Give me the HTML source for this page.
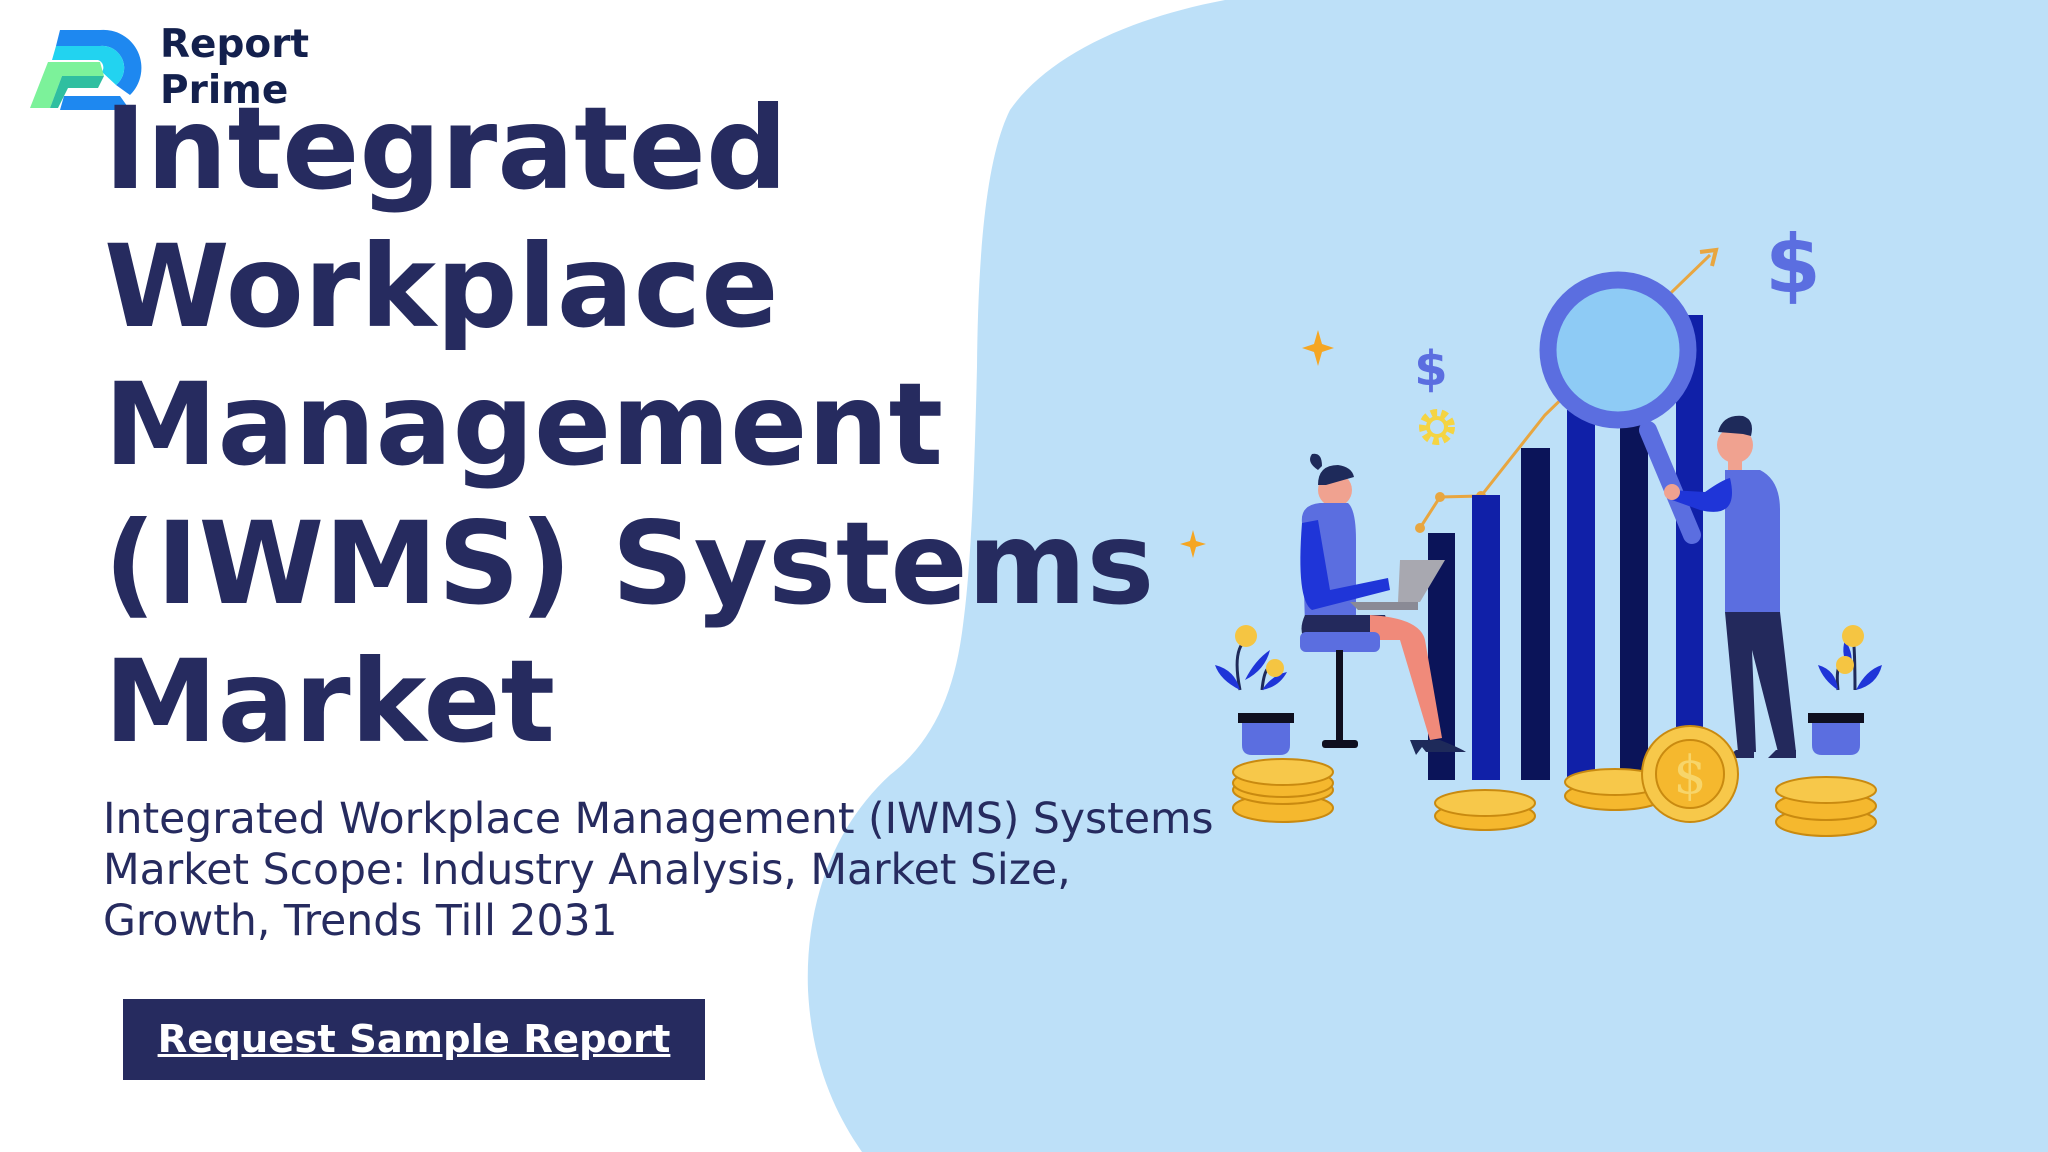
<!DOCTYPE html>
<html><head><meta charset="utf-8"><style>
html,body{margin:0;padding:0}
body{width:2048px;height:1152px;position:relative;overflow:hidden;background:#fff;font-family:"DejaVu Sans","Liberation Sans",sans-serif}
svg.bg{position:absolute;left:0;top:0}
.title{position:absolute;left:104px;top:0;margin:0;font-weight:bold;font-size:114px;color:#262b5f;line-height:138px}
.title div{position:absolute;left:0;white-space:nowrap}
.sub{position:absolute;left:103px;top:794px;font-size:42.5px;line-height:51px;color:#262b5f;white-space:nowrap}
.btn{position:absolute;left:123px;top:999px;width:582px;height:81px;background:#262b5f;color:#fff;font-weight:bold;font-size:38.5px;text-align:center;line-height:81px;text-decoration:underline}
.logo{position:absolute;left:160px;top:22px;font-weight:bold;font-size:39px;line-height:46px;color:#13204d}
</style></head><body>
<svg class="bg" width="2048" height="1152" viewBox="0 0 2048 1152">
<path d="M1225 0 C1120 20 1045 60 1010 110 C985 160 978 260 977 367 C975 450 972 560 963 625 C955 690 935 740 890 775 C830 830 805 910 808 990 C812 1070 840 1120 862 1152 L2048 1152 L2048 0 Z" fill="#bde0f8"/>
<!-- logo icon -->
<path d="M60 30 H100 A38 38 0 0 1 130 95 L116 85 A22 22 0 0 0 100 46 H56 Z" fill="#1e88f0"/>
<path d="M56 46 H100 A22 22 0 0 1 116 85 L102 72 A8 8 0 0 0 98 60 H52 Z" fill="#22d3f0"/>
<path d="M48 62 H100 L104 76 H62 L50 108 H30 Z" fill="#7cf29a"/>
<path d="M62 76 H104 L98 88 H68 L58 108 H50 Z" fill="#2fbfa0"/>
<path d="M64 96 H120 L130 110 H60 Z" fill="#1e88f0"/>
<!-- sparkles -->
<g fill="#f5a623">
<path d="M1318 330 l4 14 l12 4 l-12 4 l-4 14 l-4 -14 l-12 -4 l12 -4z"/>
<path d="M1193 530 l3 11 l10 3 l-10 3 l-3 11 l-3 -11 l-10 -3 l10 -3z"/>
</g>
<polyline points="1420,528 1440,497 1481,496 1545,415 1710,255" fill="none" stroke="#e8a640" stroke-width="3"/>
<circle cx="1420" cy="528" r="5" fill="#e8a640"/><circle cx="1440" cy="497" r="5" fill="#e8a640"/><circle cx="1481" cy="496" r="5" fill="#e8a640"/>
<path d="M1700 252 L1716 250 L1712 266" fill="none" stroke="#e8a640" stroke-width="4"/>
<circle cx="1437" cy="427" r="14" fill="none" stroke="#f5d442" stroke-width="8" stroke-dasharray="6 4"/>
<circle cx="1437" cy="427" r="9" fill="none" stroke="#f5d442" stroke-width="4"/>
<text x="1431" y="385" font-size="48" font-weight="bold" fill="#5b6ee0" text-anchor="middle">$</text>
<text x="1793" y="292" font-size="80" font-weight="bold" fill="#5b6ee0" text-anchor="middle">$</text>
<!-- bars -->
<rect x="1428" y="533" width="27" height="247" fill="#0b1459"/>
<rect x="1472" y="495" width="28" height="285" fill="#1020a8"/>
<rect x="1521" y="448" width="29" height="332" fill="#0b1459"/>
<rect x="1567" y="410" width="28" height="370" fill="#1020a8"/>
<rect x="1620" y="420" width="28" height="360" fill="#0b1459"/>
<rect x="1676" y="315" width="27" height="465" fill="#1020a8"/>
<!-- magnifier -->
<line x1="1648" y1="430" x2="1692" y2="535" stroke="#5b6ee0" stroke-width="18" stroke-linecap="round"/>
<circle cx="1618" cy="350" r="70" fill="#8ecbf5" stroke="#5b6ee0" stroke-width="17"/>
<!-- man -->
<circle cx="1735" cy="445" r="18" fill="#f0a290"/>
<path d="M1718 432 q5 -18 25 -16 q12 4 8 20 l-8 -2 z" fill="#1e2a5a"/>
<rect x="1728" y="458" width="14" height="14" fill="#f0a290"/>
<path d="M1725 470 H1760 Q1780 480 1780 510 V612 H1725 Z" fill="#5b6ee0"/>
<path d="M1730 478 Q1740 520 1700 510 L1672 500 L1670 490 L1705 492 Q1722 480 1730 478 Z" fill="#1f35d8"/>
<circle cx="1672" cy="492" r="8" fill="#f0a290"/>
<path d="M1725 612 H1780 L1796 752 H1778 L1752 650 L1756 752 H1738 Z" fill="#23295c"/>
<path d="M1736 750 h18 v8 h-28z M1776 750 h20 v8 h-28z" fill="#23295c"/>
<!-- woman -->
<circle cx="1335" cy="490" r="17" fill="#f0a290"/>
<path d="M1318 485 q0 -20 20 -20 q14 2 16 12 l-28 8 z M1318 470 q-12 -8 -6 -16 q10 -2 10 12z" fill="#1e2a5a"/>
<path d="M1302 523 Q1300 505 1320 503 H1348 Q1356 510 1356 540 V625 H1305 Z" fill="#5b6ee0"/>
<path d="M1302 523 Q1296 600 1312 610 L1390 590 L1388 578 L1330 590 L1318 520 Z" fill="#1f35d8"/>
<path d="M1305 615 H1385 Q1395 640 1370 640 H1305 Q1298 630 1305 615Z" fill="#23295c"/>
<path d="M1370 615 Q1420 618 1425 640 L1442 738 L1430 740 L1400 640 L1370 640Z" fill="#f08a7a"/>
<path d="M1410 740 l30 0 q20 8 26 12 h-40 l-4 -5 l-6 8z" fill="#1e2a5a"/>
<rect x="1300" y="632" width="80" height="20" rx="6" fill="#5b6ee0"/>
<rect x="1336" y="650" width="7" height="90" fill="#0f0f1f"/>
<rect x="1322" y="740" width="36" height="8" rx="3" fill="#0f0f1f"/>
<path d="M1398 602 L1420 602 L1445 560 L1400 560 Z" fill="#a8a8b0"/>
<path d="M1350 602 H1418 V610 H1358 Z" fill="#8a8a95"/>
<!-- plants -->
<g>
<path d="M1240 690 Q1232 650 1246 640 M1262 690 Q1265 660 1275 670" stroke="#1e2a5a" stroke-width="3" fill="none"/>
<path d="M1240 690 q-20 -10 -25 -25 q20 5 25 25z M1245 680 q10 -20 25 -30 q-5 20 -25 30z M1262 690 q10 -15 25 -18 q-8 15 -25 18z" fill="#1f35d8"/>
<circle cx="1246" cy="636" r="11" fill="#f5c542"/><circle cx="1275" cy="668" r="9" fill="#f5c542"/>
<rect x="1238" y="713" width="56" height="10" fill="#0f0f1f"/>
<path d="M1242 723 H1290 V745 Q1290 755 1280 755 H1252 Q1242 755 1242 745Z" fill="#5b6ee0"/>
</g>
<g>
<path d="M1838 690 Q1835 660 1845 665 M1855 690 Q1855 650 1853 636" stroke="#1e2a5a" stroke-width="3" fill="none"/>
<path d="M1838 690 q-15 -10 -20 -25 q18 5 20 25z M1856 690 q10 -20 26 -25 q-5 20 -26 25z M1850 670 q-10 -15 -5 -30 q10 15 5 30z" fill="#1f35d8"/>
<circle cx="1853" cy="636" r="11" fill="#f5c542"/><circle cx="1845" cy="665" r="9" fill="#f5c542"/>
<rect x="1808" y="713" width="56" height="10" fill="#0f0f1f"/>
<path d="M1812 723 H1860 V745 Q1860 755 1850 755 H1822 Q1812 755 1812 745Z" fill="#5b6ee0"/>
</g>
<!-- coins -->
<g fill="#f5b82e" stroke="#c98a10" stroke-width="2">
<ellipse cx="1283" cy="808" rx="50" ry="14"/><ellipse cx="1283" cy="790" rx="50" ry="14"/>
<ellipse cx="1283" cy="783" rx="50" ry="14"/><ellipse cx="1283" cy="772" rx="50" ry="13" fill="#f7c84a"/>
<ellipse cx="1485" cy="816" rx="50" ry="14"/><ellipse cx="1485" cy="803" rx="50" ry="13" fill="#f7c84a"/>
<ellipse cx="1615" cy="796" rx="50" ry="14"/><ellipse cx="1615" cy="782" rx="50" ry="13" fill="#f7c84a"/>
<ellipse cx="1826" cy="822" rx="50" ry="14"/><ellipse cx="1826" cy="806" rx="50" ry="14"/><ellipse cx="1826" cy="790" rx="50" ry="13" fill="#f7c84a"/>
<circle cx="1690" cy="774" r="48" fill="#f7c84a"/><circle cx="1690" cy="774" r="34" fill="#f5b82e"/>
</g>
<text x="1690" y="793" font-size="52" fill="#f7d56a" text-anchor="middle" font-family="DejaVu Serif">$</text>
</svg>
<div class="logo">Report<br>Prime</div>
<div class="title">
<div style="top:80px">Integrated</div>
<div style="top:218px">Workplace</div>
<div style="top:356px">Management</div>
<div style="top:495px">(IWMS) Systems</div>
<div style="top:633px">Market</div>
</div>
<div class="sub">Integrated Workplace Management (IWMS) Systems<br>Market Scope: Industry Analysis, Market Size,<br>Growth, Trends Till 2031</div>
<div class="btn">Request Sample Report</div>
</body></html>
